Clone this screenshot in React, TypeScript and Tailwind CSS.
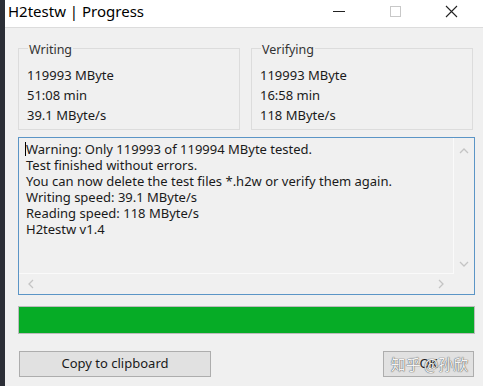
import React from "react";

const font = { fontFamily: '"Noto Sans", "Open Sans", "Noto Sans CJK SC", sans-serif' };

function Group({ title, lines }: { title: string; lines: string[] }) {
  return (
    <div className="relative flex-1 h-[82px] border border-[#dcdcdc] pl-[8px] pt-[16px]">
      <div className="absolute left-[9px] top-[-7px] bg-[#f0f0f0] px-[1px] text-[12.5px] leading-[16px] text-[#333]">
        {title}
      </div>
      {lines.map((l) => (
        <div key={l} className="text-[13px] leading-[20px] text-[#1a1a1a]">
          {l}
        </div>
      ))}
    </div>
  );
}

export default function App() {
  return (
    <div className="flex w-[483px] h-[386px] bg-[#2b2e36] overflow-hidden" style={font}>
      <div className="w-[5px] shrink-0" />
      <div className="flex-1 flex flex-col bg-[#f0f0f0]">
        {/* title bar */}
        <div className="h-[28px] bg-white border-b border-[#dcdcdc] flex items-center pb-[4px]">
          <div className="pl-[3px] text-[15px] text-black flex-1 leading-none">H2testw | Progress</div>
          <div className="w-[56px] flex justify-center">
            <div className="w-[12px] h-[1px] bg-[#222]" />
          </div>
          <div className="w-[56px] flex justify-center">
            <div className="w-[11px] h-[11px] border border-[#c8c8c8]" />
          </div>
          <div className="w-[60px] flex justify-center pr-[4px]">
            <svg width="13" height="13" viewBox="0 0 13 13">
              <path d="M1 1L12 12M12 1L1 12" stroke="#222" strokeWidth="1.1" />
            </svg>
          </div>
        </div>
        <div className="flex flex-col pl-[13px] pr-[8px]">
          {/* groups */}
          <div className="flex gap-[11px] mt-[20px] pr-[2px]">
            <Group title="Writing" lines={["119993 MByte", "51:08 min", "39.1 MByte/s"]} />
            <Group title="Verifying" lines={["119993 MByte", "16:58 min", "118 MByte/s"]} />
          </div>
          {/* text area */}
          <div className="mt-[7px] h-[158px] border border-[#5b95c6] flex flex-col">
            <div className="flex flex-1">
              <div className="flex-1 border-r border-b border-[#fafafa] pl-[7px] pt-[3px] text-[13px] leading-[16px] text-[#1a1a1a]">
                <div className="relative">
                  <span className="absolute left-[-1px] top-[1px] w-[1px] h-[14px] bg-black" />
                  Warning: Only 119993 of 119994 MByte tested.
                </div>
                <div>Test finished without errors.</div>
                <div>You can now delete the test files *.h2w or verify them again.</div>
                <div>Writing speed: 39.1 MByte/s</div>
                <div>Reading speed: 118 MByte/s</div>
                <div>H2testw v1.4</div>
              </div>
              <div className="w-[20px] flex flex-col items-center justify-between pt-[10px] pb-[7px]">
                <svg width="10" height="6" viewBox="0 0 10 6">
                  <path d="M1 5L5 1L9 5" stroke="#c4c4c4" strokeWidth="1.3" fill="none" />
                </svg>
                <svg width="10" height="6" viewBox="0 0 10 6">
                  <path d="M1 1L5 5L9 1" stroke="#c4c4c4" strokeWidth="1.3" fill="none" />
                </svg>
              </div>
            </div>
            <div className="h-[20px] flex items-center justify-between pl-[9px] pr-[30px]">
              <svg width="6" height="10" viewBox="0 0 6 10">
                <path d="M5 1L1 5L5 9" stroke="#c4c4c4" strokeWidth="1.3" fill="none" />
              </svg>
              <svg width="6" height="10" viewBox="0 0 6 10">
                <path d="M1 1L5 5L1 9" stroke="#c4c4c4" strokeWidth="1.3" fill="none" />
              </svg>
            </div>
          </div>
          {/* progress */}
          <div className="mt-[11px] h-[28px] border border-[#bcbcbc] bg-[#06ac26]" />
          {/* buttons */}
          <div className="mt-[17px] flex justify-between">
            <div className="ml-[1px] w-[192px] h-[26px] border border-[#adadad] bg-[#e1e1e1] flex items-center justify-center text-[13px] text-[#1a1a1a]">
              Copy to clipboard
            </div>
            <div className="relative mr-[1px] w-[91px] h-[26px] border border-[#adadad] bg-[#e1e1e1] flex items-center justify-center text-[13px] text-[#1a1a1a]">
              OK
              <div
                className="absolute inset-0 flex items-center justify-center pl-[2px] text-[15px] text-[#f4f4f4]"
                style={{ textShadow: "0 0 1px #555, 0 0 1px #555", fontFamily: '"Noto Sans CJK SC", sans-serif' }}
              >
                知乎 @孙欣
              </div>
            </div>
          </div>
        </div>
      </div>
    </div>
  );
}
